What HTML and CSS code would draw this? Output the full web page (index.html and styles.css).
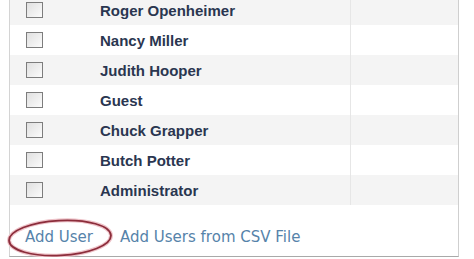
FILE: index.html
```html
<!DOCTYPE html>
<html lang="en">
<head>
    <meta charset="UTF-8">
    <title>Users</title>
    <link rel="stylesheet" href="styles.css">
</head>
<body>
    <div class="users-box">
        <table class="users">
            <tr class="alt">
                <td class="check"><span class="box"></span></td>
                <td class="name">Roger Openheimer</td>
                <td class="extra"></td>
            </tr>
            <tr>
                <td class="check"><span class="box"></span></td>
                <td class="name">Nancy Miller</td>
                <td class="extra"></td>
            </tr>
            <tr class="alt">
                <td class="check"><span class="box"></span></td>
                <td class="name">Judith Hooper</td>
                <td class="extra"></td>
            </tr>
            <tr>
                <td class="check"><span class="box"></span></td>
                <td class="name">Guest</td>
                <td class="extra"></td>
            </tr>
            <tr class="alt">
                <td class="check"><span class="box"></span></td>
                <td class="name">Chuck Grapper</td>
                <td class="extra"></td>
            </tr>
            <tr>
                <td class="check"><span class="box"></span></td>
                <td class="name">Butch Potter</td>
                <td class="extra"></td>
            </tr>
            <tr class="alt">
                <td class="check"><span class="box"></span></td>
                <td class="name">Administrator</td>
                <td class="extra"></td>
            </tr>
        </table>

        <div class="actions">
            <a class="action" href="#">Add User</a>
            <a class="action" href="#">Add Users from CSV File</a>
            <!-- marca a mano alrededor de "Add User" -->
            <svg class="circle-mark" width="112" height="44" viewBox="0 0 112 44">
                <ellipse cx="56" cy="22" rx="51" ry="17.5" transform="rotate(-3 56 22)"
                         fill="none" stroke="#eec3c9" stroke-width="4"/>
                <ellipse cx="56" cy="22" rx="51" ry="17.5" transform="rotate(-3 56 22)"
                         fill="none" stroke="#8c2d3b" stroke-width="1.8"/>
            </svg>
        </div>
    </div>
</body>
</html>
```

FILE: styles.css
```css
/* General */
body {
    margin: 0;
    background-color: #fff;
    font-family: 'Liberation Sans', Arial, sans-serif;
}

/* Caja de usuarios */
.users-box {
    position: relative;
    width: 448px;
    margin-left: 9px;
    margin-top: -5px;
    border-left: 1px solid #d4d4d4;
    border-right: 1px solid #cfcfcf;
    border-bottom: 1px solid #a9a9a9;
}

.users {
    width: 100%;
    border-collapse: collapse;
}

.users td {
    height: 30px;
    padding: 0;
    vertical-align: middle;
}

.users tr.alt td {
    background-color: #f4f4f4;
}

.check {
    width: 90px;
}

.box {
    display: block;
    width: 15px;
    height: 14px;
    margin-left: 16px;
    border: 1px solid #7d7d7d;
    background: linear-gradient(135deg, #e0e0e0, #fbfbfb);
}

.name {
    width: 250px;
    font-size: 15px;
    font-weight: bold;
    color: #2a3650;
    border-right: 1px solid #e6e6e6;
}

/* Enlaces de abajo */
.actions {
    display: flex;
    gap: 27px;
    height: 39px;
    padding-top: 12px;
    padding-left: 15px;
    align-items: center;
    font-family: 'DejaVu Sans', Verdana, sans-serif;
    font-size: 15px;
}

.action {
    color: #5683aa;
    text-decoration: none;
}

.circle-mark {
    position: absolute;
    left: -6px;
    bottom: -4px;
}
```
